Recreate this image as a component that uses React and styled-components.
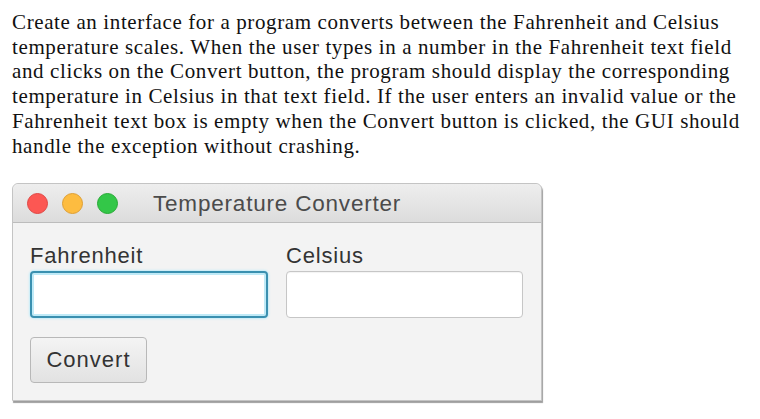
import React, { useState } from "react";
import styled, { createGlobalStyle } from "styled-components";

const GlobalStyle = createGlobalStyle`
  html, body {
    margin: 0;
    padding: 0;
    background: #ffffff;
  }
`;

const Page = styled.div`
  width: 760px;
  height: 419px;
  padding: 10px 0 0 12px;
  box-sizing: border-box;
  overflow: hidden;
`;

const Prompt = styled.p`
  margin: 0;
  font-family: "Liberation Serif", "DejaVu Serif", serif;
  font-size: 21px;
  line-height: 24.7px;
  letter-spacing: 0.62px;
  color: #111;
  white-space: nowrap;
`;

const Window = styled.div`
  margin-top: 25px;
  width: 530px;
  box-sizing: border-box;
  border: 1px solid #c4c4c4;
  border-radius: 6px 6px 0 0;
  background: #f3f3f3;
  box-shadow: 1px 2px 1px rgba(0, 0, 0, 0.38);
  font-family: "Liberation Sans", Arial, sans-serif;
  letter-spacing: 0.8px;
`;

const TitleBar = styled.div`
  display: flex;
  align-items: center;
  height: 38px;
  padding-left: 14px;
  border-bottom: 1px solid #bcbcbc;
  border-radius: 6px 6px 0 0;
  background: linear-gradient(180deg, #eeeeee 0%, #dcdcdc 100%);
`;

const Lights = styled.div`
  display: flex;
  gap: 14px;
  margin-right: 35px;
`;

const Light = styled.span`
  width: 21px;
  height: 21px;
  border-radius: 50%;
  box-sizing: border-box;
  background: ${(p) => p.$fill};
  border: 1px solid ${(p) => p.$edge};
`;

const Title = styled.div`
  font-size: 22.5px;
  color: #4b4b4b;
  padding-top: 1px;
`;

const Body = styled.div`
  padding: 20px 19px 17px 17px;
`;

const Fields = styled.div`
  display: grid;
  grid-template-columns: 238px 237px;
  column-gap: 18px;
`;

const Field = styled.div`
  display: flex;
  flex-direction: column;
  gap: 3px;
`;

const Label = styled.label`
  font-size: 22px;
  line-height: 25px;
  color: #333;
`;

const Input = styled.input`
  box-sizing: border-box;
  width: 100%;
  height: 47px;
  border-radius: 4px;
  background: #ffffff;
  font-family: "Liberation Sans", Arial, sans-serif;
  font-size: 20px;
  padding: 0 8px;
  outline: none;
  border: ${(p) => (p.$focused ? "2px solid #3a90b0" : "1px solid #c6c6c6")};
  box-shadow: ${(p) =>
    p.$focused
      ? "inset 0 0 0 2px #bfeaf7, 0 0 2px 1px #c4ecf8"
      : "inset 0 1px 1px rgba(0, 0, 0, 0.05)"};
`;

const ConvertButton = styled.button`
  margin-top: 19px;
  width: 117px;
  height: 46px;
  box-sizing: border-box;
  border: 1px solid #b8b8b8;
  border-radius: 4px;
  background: linear-gradient(180deg, #f4f4f4 0%, #e2e2e2 100%);
  font-family: "Liberation Sans", Arial, sans-serif;
  font-size: 22px;
  letter-spacing: 1px;
  color: #333;
  padding: 0;
  cursor: pointer;
`;

const App = () => {
  const [fahrenheit, setFahrenheit] = useState("");
  const [celsius, setCelsius] = useState("");

  const handleConvert = () => {
    const f = parseFloat(fahrenheit);
    if (fahrenheit.trim() === "" || isNaN(f)) {
      setCelsius("Invalid");
      return;
    }
    setCelsius(((f - 32) * 5 / 9).toFixed(2));
  };

  return (
    <Page>
      <GlobalStyle />
      <Prompt>
        Create an interface for a program converts between the Fahrenheit and Celsius
        <br />
        temperature scales. When the user types in a number in the Fahrenheit text field
        <br />
        and clicks on the Convert button, the program should display the corresponding
        <br />
        temperature in Celsius in that text field. If the user enters an invalid value or the
        <br />
        Fahrenheit text box is empty when the Convert button is clicked, the GUI should
        <br />
        handle the exception without crashing.
      </Prompt>
      <Window>
        <TitleBar>
          <Lights>
            <Light $fill="#fc5753" $edge="#df4744" />
            <Light $fill="#fdbc40" $edge="#de9f34" />
            <Light $fill="#33c748" $edge="#27aa35" />
          </Lights>
          <Title>Temperature Converter</Title>
        </TitleBar>
        <Body>
          <Fields>
            <Field>
              <Label htmlFor="fahrenheit">Fahrenheit</Label>
              <Input
                id="fahrenheit"
                $focused
                value={fahrenheit}
                onChange={(e) => setFahrenheit(e.target.value)}
              />
            </Field>
            <Field>
              <Label htmlFor="celsius">Celsius</Label>
              <Input
                id="celsius"
                value={celsius}
                onChange={(e) => setCelsius(e.target.value)}
              />
            </Field>
          </Fields>
          <ConvertButton onClick={handleConvert}>Convert</ConvertButton>
        </Body>
      </Window>
    </Page>
  );
};

export default App;
